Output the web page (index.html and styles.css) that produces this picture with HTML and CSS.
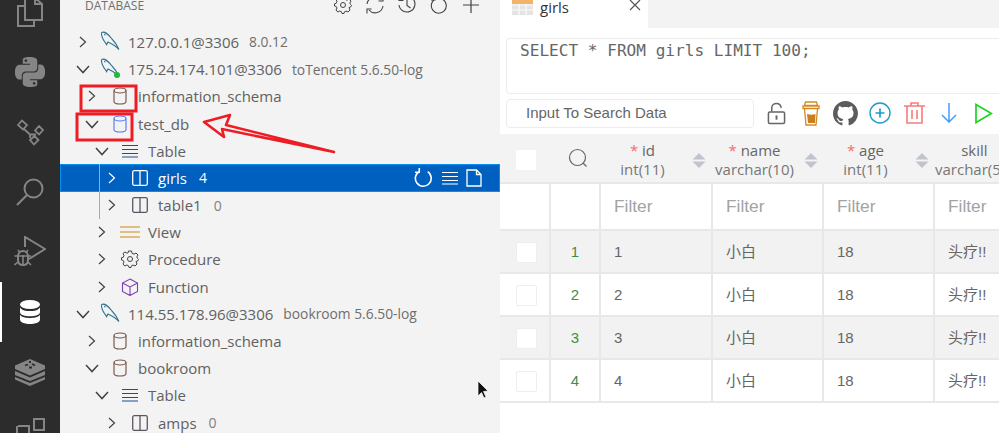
FILE: index.html
```html
<!DOCTYPE html>
<html lang="en">
<head>
<meta charset="utf-8">
<title>Database</title>
<link rel="stylesheet" href="styles.css">
</head>
<body>
<svg class="defs" width="0" height="0">
  <symbol id="dolphin" viewBox="0 0 20 24">
    <path d="M1.500 2.500C5 1 8 4 12 9C15 12 17 15 19 19.500M1.500 2.500C1 6 3 10 6.700 14.700C7 13.500 7.500 12.500 8 12C10 13 13 14.500 15 16C16.500 17 18 18.500 19 19.500M4 4.500L5.500 5" fill="none" stroke="#2f7391" stroke-width="1.100"/>
  </symbol>
  <symbol id="db" viewBox="0 0 16 18">
    <ellipse cx="8" cy="3.500" rx="6" ry="2.500" fill="none" stroke="currentColor" stroke-width="1.200"/>
    <path d="M2 3.500V14.500C2 16 5 17 8 17S14 16 14 14.500V3.500" fill="none" stroke="currentColor" stroke-width="1.200"/>
  </symbol>
  <symbol id="lines" viewBox="0 0 16 14">
    <path d="M0 1.500H16M0 5.500H16M0 9.500H16M0 13H16" fill="none" stroke="currentColor" stroke-width="1.200"/>
  </symbol>
  <symbol id="tbl" viewBox="0 0 16 16">
    <rect x="0.700" y="0.700" width="14.600" height="14.600" rx="1.500" fill="none" stroke="currentColor" stroke-width="1.300"/>
    <path d="M8 1V15" stroke="currentColor" stroke-width="1.300"/>
  </symbol>
  <symbol id="chev-r" viewBox="0 0 10 12">
    <path d="M2 1L7.500 6L2 11" fill="none" stroke="currentColor" stroke-width="1.200"/>
  </symbol>
  <symbol id="chev-d" viewBox="0 0 12 10">
    <path d="M1 2.500L6 8L11 2.500" fill="none" stroke="currentColor" stroke-width="1.200"/>
  </symbol>
  <symbol id="gear" viewBox="0 0 18 18">
    <path d="M7.500 1H10.500L11 3.300L13 4.200L15 3L17 5L15.800 7L16.600 8.500L17.500 9.500L16.600 11L15 11.500L16 14L14 16L12 15L10.500 15.800L10 17.500H8L7.500 15.800L5.800 15L3.800 16L2 14L3 12L2.200 10.500L0.500 10V7.800L2.200 7.300L3 5.500L2 3.500L4 2L6 3.200L7.200 2.700Z" fill="none" stroke="currentColor" stroke-width="1"/>
    <circle cx="9" cy="9" r="2.500" fill="none" stroke="currentColor" stroke-width="1"/>
  </symbol>
  <symbol id="sort" viewBox="0 0 14 15">
    <path d="M7 0L13.500 6.500H0.500ZM7 15L0.500 8.500H13.500Z" fill="#c0c4cc"/>
  </symbol>
</svg>

<div class="app">
  <nav class="activity">
    <div class="act"><svg width="28" height="34" viewBox="0 0 28 34" class="ico"><path d="M9 11H2V31H18V25M9 3V25H26V9L19 3ZM19 3V9H26" fill="none" stroke="currentColor" stroke-width="2"/></svg></div>
    <div class="act"><svg width="30" height="30" viewBox="0 0 24 24" class="ico"><path fill="currentColor" d="M14.250.18l.9.2.73.26.59.3.45.32.34.34.25.34.16.33.1.3.04.26.02.2-.01.13V8.500l-.05.63-.13.55-.21.46-.26.38-.3.31-.33.25-.35.19-.35.14-.33.1-.3.07-.26.04-.21.02H8.770l-.69.05-.59.14-.5.22-.41.27-.33.32-.27.35-.2.36-.15.37-.1.35-.07.32-.04.27-.02.21v3.060H3.170l-.21-.03-.28-.07-.32-.12-.35-.18-.36-.26-.36-.36-.35-.46-.32-.59-.28-.73-.21-.88-.14-1.050-.05-1.230.06-1.220.16-1.040.24-.87.32-.71.36-.57.4-.44.42-.33.42-.24.4-.16.36-.1.32-.05.24-.01h.16l.06.01h8.160v-.83H6.180l-.01-2.750-.02-.37.05-.34.11-.31.17-.28.25-.26.31-.23.38-.2.44-.18.51-.15.58-.12.64-.1.71-.06.77-.04.84-.02 1.270.05zm-6.300 1.980l-.23.33-.08.41.08.41.23.34.33.22.41.09.41-.09.33-.22.23-.34.08-.41-.08-.41-.23-.33-.33-.22-.41-.09-.41.09zm13.090 3.950l.28.06.32.12.35.18.36.27.36.35.35.47.32.59.28.73.21.88.14 1.040.05 1.230-.06 1.230-.16 1.040-.24.86-.32.71-.36.57-.4.45-.42.33-.42.24-.4.16-.36.09-.32.05-.24.02-.16-.01h-8.220v.82h5.840l.01 2.760.02.36-.05.34-.11.31-.17.29-.25.25-.31.24-.38.2-.44.17-.51.15-.58.13-.64.09-.71.07-.77.04-.84.01-1.270-.04-1.070-.14-.9-.2-.73-.25-.59-.3-.45-.33-.34-.34-.25-.34-.16-.33-.1-.3-.04-.25-.02-.2.01-.13v-5.340l.05-.64.13-.54.21-.46.26-.38.3-.32.33-.24.35-.2.35-.14.33-.1.3-.06.26-.04.21-.02.13-.01h5.840l.69-.05.59-.14.5-.21.41-.28.33-.32.27-.35.2-.36.15-.36.1-.35.07-.32.04-.28.02-.21V6.070h2.090l.14.01zm-6.470 14.250l-.23.33-.08.41.08.41.23.33.33.23.41.08.41-.08.33-.23.23-.33.08-.41-.08-.41-.23-.33-.33-.23-.41-.08-.41.08z"/></svg></div>
    <div class="act"><svg width="28" height="28" viewBox="0 0 28 28" class="ico"><path d="M2 7L6 2.500L11 7L7 11.500ZM19 12.500L23 8L27 12L23 16.500ZM14 22L18.500 18L22.500 22L18 26.500ZM8 11L14 16.500M14 16.500H20M14 16.500V20" fill="none" stroke="currentColor" stroke-width="1.800"/></svg></div>
    <div class="act"><svg width="30" height="30" viewBox="0 0 30 30" class="ico"><circle cx="18.500" cy="11.500" r="9" fill="none" stroke="currentColor" stroke-width="2"/><path d="M12 18L2 28" stroke="currentColor" stroke-width="2.200"/></svg></div>
    <div class="act"><svg width="32" height="32" viewBox="0 0 32 32" class="ico"><path d="M11 11V1L31 13L15 23" fill="none" stroke="currentColor" stroke-width="2"/><path d="M4 20.500C4 17 6.500 15 9 15S14 17 14 20.500V24C14 27 12 29 9 29S4 27 4 24Z" fill="none" stroke="currentColor" stroke-width="2"/><path d="M0.500 20H17M0.500 29L4 26M17 29L14 26M4 14L6 16.500M14 14L12 16.500M9 19V28" fill="none" stroke="currentColor" stroke-width="1.600"/></svg></div>
    <div class="act act-on"><svg width="22" height="24" viewBox="0 0 22 24" class="ico-on"><ellipse cx="11" cy="4.500" rx="10" ry="4.500" fill="currentColor"/><path d="M1 7.500C3 10.500 7 11 11 11S19 10.500 21 7.500V12C21 15 16 16.200 11 16.200S1 15 1 12Z" fill="currentColor"/><path d="M1 14.800C3 17.500 7 18 11 18S19 17.500 21 14.800V19.500C21 22.500 16 24 11 24S1 22.500 1 19.500Z" fill="currentColor"/></svg></div>
    <div class="act"><svg width="32" height="28" viewBox="0 0 32 28" class="ico"><path d="M16 1L31 7.500V11L16 17.500L1 11V7.500Z" fill="currentColor"/><path d="M1 13L16 19.500L31 13V17L16 23L1 17Z" fill="currentColor"/><path d="M1 19L16 25L31 19V21.500L16 28L1 21.500Z" fill="currentColor"/><path d="M11 7.500L14 6.500M18 6L21 7.500M15 9.500H18M15 4H17" stroke="#2c2c2c" stroke-width="1.800"/></svg></div>
    <div class="act"><svg width="30" height="30" viewBox="0 0 30 30" class="ico"><path d="M3 9H14V29H2V9M14 18H2M19 2H29V13H19Z" fill="none" stroke="currentColor" stroke-width="2"/></svg></div>
  </nav>

  <aside class="side">
    <header class="side-head">
      <span class="side-title">DATABASE</span>
      <div class="side-actions">
        <span class="sa"><svg width="18" height="18"><use href="#gear"/></svg></span>
        <span class="sa"><svg width="20" height="20" viewBox="0 0 20 20"><path d="M2 9A8 8 0 0 1 16 5M18 11A8 8 0 0 1 4 15M13.500 6H18V1.500M6.500 14H2V18.500" fill="none" stroke="currentColor" stroke-width="1.100"/></svg></span>
        <span class="sa"><svg width="20" height="20" viewBox="0 0 20 20"><path d="M3 5A8 8 0 1 1 2 10M2 1V5.500H6.500M10 5V10.500L13.500 13" fill="none" stroke="currentColor" stroke-width="1.100"/></svg></span>
        <span class="sa"><svg width="18" height="18" viewBox="0 0 18 18"><path d="M5.500 3A7.500 7.500 0 1 0 13 3.500M5 0V4H1" fill="none" stroke="currentColor" stroke-width="1.100"/></svg></span>
        <span class="sa"><svg width="18" height="18" viewBox="0 0 18 18"><path d="M9 1V17M1 9H17" fill="none" stroke="currentColor" stroke-width="1.200"/></svg></span>
      </div>
    </header>
    <div class="tree">
      <div class="row l0"><svg class="chev"><use href="#chev-r"/></svg><span class="ic"><svg class="dolphin"><use href="#dolphin"/></svg></span><span class="name">127.0.0.1@3306</span><span class="desc">8.0.12</span></div>
      <div class="row l0"><svg class="chev"><use href="#chev-d"/></svg><span class="ic"><svg class="dolphin"><use href="#dolphin"/></svg><i class="dot"></i></span><span class="name">175.24.174.101@3306</span><span class="desc">toTencent 5.6.50-log</span></div>
      <div class="row l1"><svg class="chev"><use href="#chev-r"/></svg><span class="ic c-db"><svg class="dbi"><use href="#db"/></svg></span><span class="name">information_schema</span></div>
      <div class="row l1"><svg class="chev"><use href="#chev-d"/></svg><span class="ic c-blue"><svg class="dbi"><use href="#db"/></svg></span><span class="name">test_db</span></div>
      <div class="row l2"><svg class="chev"><use href="#chev-d"/></svg><span class="ic c-navy"><svg class="li"><use href="#lines"/></svg></span><span class="name">Table</span></div>
      <div class="guide">
        <div class="row l3 sel"><svg class="chev"><use href="#chev-r"/></svg><span class="ic"><svg class="tb"><use href="#tbl"/></svg></span><span class="name">girls</span><span class="count">4</span>
          <span class="row-actions">
            <svg width="19" height="19" viewBox="0 0 18 18"><path d="M5.500 3A7.500 7.500 0 1 0 13 3.500M5 0V4H1" fill="none" stroke="currentColor" stroke-width="1.500"/></svg>
            <svg width="16" height="14"><use href="#lines"/></svg>
            <svg width="16" height="18" viewBox="0 0 16 18"><path d="M1 1H10.500L15 5.500V17H1ZM10.500 1V5.500H15" fill="none" stroke="currentColor" stroke-width="1.300"/></svg>
          </span>
        </div>
        <div class="row l3"><svg class="chev"><use href="#chev-r"/></svg><span class="ic c-tb"><svg class="tb"><use href="#tbl"/></svg></span><span class="name">table1</span><span class="count">0</span></div>
      </div>
      <div class="row l2"><svg class="chev"><use href="#chev-r"/></svg><span class="ic c-gold"><svg class="vw" viewBox="0 0 20 12"><path d="M0 1H20M0 6H20M0 11H20" fill="none" stroke="currentColor" stroke-width="1.200"/></svg></span><span class="name">View</span></div>
      <div class="row l2"><svg class="chev"><use href="#chev-r"/></svg><span class="ic c-dark"><svg class="gr"><use href="#gear"/></svg></span><span class="name">Procedure</span></div>
      <div class="row l2"><svg class="chev"><use href="#chev-r"/></svg><span class="ic c-purple"><svg class="gr" viewBox="0 0 18 18"><path d="M9 1L16.500 5V13.500L9 17.500L1.500 13.500V5ZM1.500 5L9 9L16.500 5M9 9V17.500" fill="none" stroke="currentColor" stroke-width="1.100"/></svg></span><span class="name">Function</span></div>
      <div class="row l0"><svg class="chev"><use href="#chev-d"/></svg><span class="ic"><svg class="dolphin"><use href="#dolphin"/></svg></span><span class="name">114.55.178.96@3306</span><span class="desc">bookroom 5.6.50-log</span></div>
      <div class="row l1"><svg class="chev"><use href="#chev-r"/></svg><span class="ic c-db"><svg class="dbi"><use href="#db"/></svg></span><span class="name">information_schema</span></div>
      <div class="row l1"><svg class="chev"><use href="#chev-d"/></svg><span class="ic c-db"><svg class="dbi"><use href="#db"/></svg></span><span class="name">bookroom</span></div>
      <div class="row l2"><svg class="chev"><use href="#chev-d"/></svg><span class="ic c-navy"><svg class="li"><use href="#lines"/></svg></span><span class="name">Table</span></div>
      <div class="row l3"><svg class="chev"><use href="#chev-r"/></svg><span class="ic c-tb"><svg class="tb"><use href="#tbl"/></svg></span><span class="name">amps</span><span class="count">0</span></div>
    </div>
  </aside>

  <main class="main">
    <div class="tabs">
      <div class="tab">
        <svg class="tab-ico" width="21" height="15" viewBox="0 0 21 15"><rect width="21" height="15" fill="#e4e4e4"/><rect width="21" height="4" fill="#f2b36a"/><path d="M0 5H21M0 10H21M7 4V15M14 4V15" stroke="#fafafa" stroke-width="1.200"/></svg>
        <span class="tab-name">girls</span>
        <svg class="tab-x" width="12" height="12" viewBox="0 0 12 12"><path d="M1 1L11 11M11 1L1 11" stroke="#555" stroke-width="1.200"/></svg>
      </div>
    </div>
    <div class="editor">SELECT * FROM girls LIMIT 100;</div>
    <div class="toolbar">
      <div class="search">Input To Search Data</div>
      <div class="tools">
        <span class="tool"><svg width="19" height="23" viewBox="0 0 20 23"><path d="M5 9.500V5.500C5 2.500 7.500 1 10 1S14.500 2.500 15 5.500" fill="none" stroke="#666" stroke-width="1.600"/><rect x="1.500" y="10" width="17" height="12" rx="1.500" fill="none" stroke="#666" stroke-width="1.600"/><path d="M10 13.500V18" stroke="#666" stroke-width="2"/></svg></span>
        <span class="tool"><svg width="18" height="25" viewBox="0 0 18 25"><path d="M3.500 1H14.500L15.500 4.500H2.500ZM1 5H17V7.500H1Z" fill="none" stroke="#d48a24" stroke-width="1.300"/><path d="M2.500 8L4 24H14L15.500 8" fill="none" stroke="#d48a24" stroke-width="1.300"/><path d="M5 13C8 14 11 14 13.500 13L13 22H6Z" fill="#c97f1c"/></svg></span>
        <span class="tool"><svg width="25" height="25" viewBox="0 0 16 16"><path fill="#5c5c5c" d="M8 0C3.580 0 0 3.580 0 8c0 3.540 2.290 6.530 5.470 7.590.4.070.55-.17.55-.38 0-.19-.01-.82-.01-1.490-2.010.37-2.530-.49-2.690-.94-.09-.23-.48-.94-.82-1.130-.28-.15-.68-.52-.01-.53.63-.01 1.080.58 1.230.82.72 1.210 1.870.87 2.330.66.07-.52.28-.87.51-1.070-1.780-.2-3.640-.89-3.640-3.950 0-.87.31-1.590.82-2.150-.08-.2-.36-1.020.08-2.120 0 0 .67-.21 2.200.82.64-.18 1.320-.27 2-.27.68 0 1.360.09 2 .27 1.530-1.040 2.200-.82 2.200-.82.44 1.100.16 1.920.08 2.120.51.56.82 1.270.82 2.150 0 3.070-1.870 3.750-3.650 3.950.29.25.54.73.54 1.480 0 1.070-.01 1.930-.01 2.200 0 .21.15.46.55.38A8.013 8.013 0 0016 8c0-4.420-3.580-8-8-8z"/></svg></span>
        <span class="tool"><svg width="22" height="22" viewBox="0 0 22 22"><circle cx="11" cy="11" r="10" fill="none" stroke="#1d9bc9" stroke-width="1.400"/><path d="M11 6.500V15.500M6.500 11H15.500" stroke="#1d9bc9" stroke-width="1.700"/></svg></span>
        <span class="tool"><svg width="21" height="22" viewBox="0 0 21 22"><path d="M0 4H21M7 4V1H14V4M3 4V21H18V4M8 8V17M13 8V17" fill="none" stroke="#f47c7c" stroke-width="1.600"/></svg></span>
        <span class="tool"><svg width="16" height="20" viewBox="0 0 16 20"><path d="M8 0V19M1 12L8 19L15 12" fill="none" stroke="#409eff" stroke-width="1.500"/></svg></span>
        <span class="tool"><svg width="18" height="21" viewBox="0 0 18 21"><path d="M1 1.500L16.500 10.500L1 19.500Z" fill="none" stroke="#1fd01f" stroke-width="1.700"/></svg></span>
      </div>
    </div>
    <div class="grid">
      <div class="hcell h-check"><span class="check check-h"></span></div>
      <div class="hcell h-search"><svg width="20" height="20" viewBox="0 0 20 20"><circle cx="9.500" cy="9.500" r="8" fill="none" stroke="#666" stroke-width="1.200"/><path d="M15 15L18.500 18.500" stroke="#666" stroke-width="1.300"/></svg></div>
      <div class="hcell col"><div class="hlabel"><div><b class="req">*</b> id</div><div class="htype">int(11)</div></div><svg class="sort"><use href="#sort"/></svg></div>
      <div class="hcell col"><div class="hlabel"><div><b class="req">*</b> name</div><div class="htype">varchar(10)</div></div><svg class="sort"><use href="#sort"/></svg></div>
      <div class="hcell col"><div class="hlabel"><div><b class="req">*</b> age</div><div class="htype">int(11)</div></div><svg class="sort"><use href="#sort"/></svg></div>
      <div class="hcell col"><div class="hlabel"><div>skill</div><div class="htype">varchar(50)</div></div></div>

      <div class="cell f"></div><div class="cell f"></div><div class="cell f ph">Filter</div><div class="cell f ph">Filter</div><div class="cell f ph">Filter</div><div class="cell f ph">Filter</div>

      <div class="cell g c ck"><span class="check"></span></div><div class="cell g c num">1</div><div class="cell g">1</div><div class="cell g">小白</div><div class="cell g">18</div><div class="cell g">头疗!!</div>
      <div class="cell c ck"><span class="check"></span></div><div class="cell c num">2</div><div class="cell">2</div><div class="cell">小白</div><div class="cell">18</div><div class="cell">头疗!!</div>
      <div class="cell g c ck"><span class="check"></span></div><div class="cell g c num">3</div><div class="cell g">3</div><div class="cell g">小白</div><div class="cell g">18</div><div class="cell g">头疗!!</div>
      <div class="cell c ck"><span class="check"></span></div><div class="cell c num">4</div><div class="cell">4</div><div class="cell">小白</div><div class="cell">18</div><div class="cell">头疗!!</div>
    </div>
  </main>
</div>

<svg class="annot" width="999" height="433" viewBox="0 0 999 433">
  <rect x="81" y="86" width="55" height="25" fill="none" stroke="#ee1c25" stroke-width="3"/>
  <rect x="77" y="114" width="55" height="26" fill="none" stroke="#ee1c25" stroke-width="3"/>
  <path d="M204 122L230 115L226 125L334 152L222 129L224 137Z" fill="none" stroke="#ee1c25" stroke-width="2.600" stroke-linejoin="round"/>
  <path d="M478 381V396L481.500 392.500L484 398L486 397L483.500 391.500L488 391Z" fill="#111" stroke="#fff" stroke-width="0.700"/>
</svg>
</body>
</html>
```
FILE: styles.css
```css
* { box-sizing: border-box; }
html, body { margin: 0; height: 433px; overflow: hidden; background: #fff; }
body { font-family: "Open Sans", "Noto Sans CJK SC", sans-serif; position: relative; }
.defs { position: absolute; }
.annot { position: absolute; left: 0; top: 0; pointer-events: none; }
.app { display: flex; height: 433px; width: 999px; overflow: hidden; }

.activity { width: 60px; flex: none; background: #2c2c2c; display: flex; flex-direction: column; height: 433px; overflow: hidden; }
.act { flex: none; height: 60px; display: flex; align-items: center; justify-content: center; color: #858585; }
.act:first-child { margin-top: -18px; }
.act-on { color: #fff; border-left: 2px solid #fff; padding-right: 2px; }
.ico, .ico-on { display: block; }

.side { width: 440px; flex: none; background: #f3f3f3; color: #616161; display: flex; flex-direction: column; overflow: hidden; }
.side-head { height: 28.400px; flex: none; display: flex; justify-content: space-between; padding: 0 13px 0 25px; }
.side-title { font-size: 12px; line-height: 12px; color: #6f6f6f; }
.side-actions { display: flex; margin-top: -4px; height: 18px; }
.sa { width: 32px; display: flex; justify-content: center; align-items: center; color: #424242; }
.sa svg { display: block; }

.row { height: 27.200px; display: flex; align-items: center; font-size: 15px; white-space: nowrap; }
.l0 { padding-left: 15px; }
.l1 { padding-left: 24px; }
.l2 { padding-left: 34px; }
.l3 { padding-left: 44px; }
.chev { width: 16px; height: 12px; flex: none; color: #424242; }
.ic { width: 38px; flex: none; display: flex; justify-content: center; position: relative; padding-left: 2px; }
.l0 .ic { width: 37px; padding-left: 0; }
.ic svg { display: block; }
.dolphin { width: 20px; height: 24px; }
.dbi { width: 16px; height: 18px; }
.li { width: 16px; height: 14px; }
.vw { width: 20px; height: 12px; }
.tb { width: 16px; height: 16px; }
.gr { width: 18px; height: 18px; }
.dot { position: absolute; left: 22.500px; top: 15px; width: 6px; height: 6px; border-radius: 50%; background: #22b83a; }
.c-db { color: #7a5a4e; }
.c-blue { color: #5f7ff0; }
.c-navy { color: #1b4f9e; }
.c-tb { color: #5d5560; }
.c-gold { color: #c98a12; }
.c-dark { color: #424242; }
.c-purple { color: #7d3fb0; }
.desc { margin-left: 10px; color: #6e6e6e; font-size: 13.800px; }
.count { margin-left: 12px; color: #808080; font-size: 14px; }

.guide { position: relative; }
.guide::before { content: ""; position: absolute; left: 39px; top: 0; bottom: 0; width: 1px; background: #a9a9a9; z-index: 1; }
.sel { background: #0060c0; color: #fff; box-shadow: inset 0 0 0 1px #0090f1; position: relative; }
.sel .chev, .sel .count { color: #fff; }
.row-actions { margin-left: auto; padding-right: 18px; display: flex; align-items: center; gap: 8.500px; }
.row-actions svg { display: block; }

.main { flex: 1; min-width: 0; display: flex; flex-direction: column; background: #fff; color: #666; overflow: hidden; }
.tabs { height: 28px; flex: none; background: #f3f3f3; }
.tab { width: 148px; height: 28px; background: #fff; display: flex; padding-left: 12px; align-items: flex-start; position: relative; }
.tab-ico { flex: none; }
.tab-name { margin-left: 7px; font-size: 15px; line-height: 14px; color: #333; }
.tab-x { margin-left: 60px; margin-top: -1px; flex: none; }
.editor { margin: 10px 0 4px 6px; height: 56px; border: 1px solid #ececec; border-right: 0; border-radius: 4px 0 0 4px; padding: 1px 13px; font: 16.100px/22px "DejaVu Sans Mono", monospace; color: #666; white-space: pre; }
.toolbar { height: 30px; flex: none; display: flex; align-items: center; margin-left: 6px; }
.search { width: 248px; height: 29px; flex: none; border: 1px solid #ececec; border-radius: 4px; font: 15px/26px "Liberation Sans", sans-serif; padding-left: 19px; color: #666; }
.tools { display: flex; margin-left: 5px; align-items: center; }
.tool { width: 34.600px; display: flex; justify-content: center; align-items: center; }
.tool svg { display: block; }

.grid { margin-top: 6px; display: grid; grid-template-columns: 51px 50px 112px 111px 111px 64px; grid-template-rows: 50px 47px 43px 43px 43px 43px; width: 499px; font: 15px/1 "Liberation Sans", "Noto Sans CJK SC", sans-serif; }
.hcell { background: #f3f3f3; border-bottom: 2px solid #e8e8e8; display: flex; align-items: center; justify-content: center; padding-top: 4px; }
.h-search { padding-left: 4px; }
.h-search svg { margin-top: -5px; }
.col { justify-content: flex-start; position: relative; font-family: "Open Sans", sans-serif; font-size: 15px; line-height: 19px; overflow: hidden; }
.hlabel { width: 83px; text-align: center; white-space: nowrap; }
.col:last-child .hlabel { width: 64px; display: flex; flex-direction: column; align-items: flex-start; padding-left: 2px; }
.col:last-child .hlabel div:first-child { padding-left: 26px; }
.htype { color: #777; }
.req { color: #f56c6c; font-weight: 400; }
.sort { width: 14px; height: 15px; flex: none; margin-left: 8px; display: block; }
.cell { border-right: 2px solid #e8e8e8; border-bottom: 2px solid #e8e8e8; padding-left: 13px; display: flex; align-items: center; color: #666; background: #fff; white-space: nowrap; overflow: hidden; }
.cell:nth-child(6n) { border-right: 0; }
.ph { color: #a3a3a3; font-size: 17.300px; }
.g { background: #f2f2f2; }
.c { justify-content: center; padding-left: 0; }
.ck { padding-left: 4px; padding-top: 1px; }
.num { color: #3f8f3f; }
.check { width: 21px; height: 21px; background: #fff; border: 1px solid #eee; border-radius: 2px; display: block; }
.check-h { width: 20px; height: 20px; border: 0; }
```
